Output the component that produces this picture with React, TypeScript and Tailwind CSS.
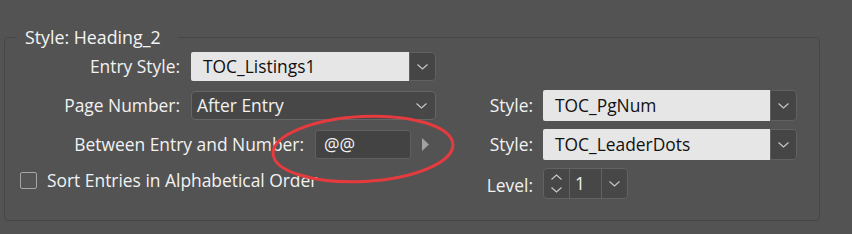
import React from "react";

const font = { fontFamily: '"Open Sans", "Noto Sans", sans-serif' };

function Chevron({ className = "" }: { className?: string }) {
  return (
    <svg width="11" height="6" viewBox="0 0 11 6" className={className}>
      <polyline points="0.5,0.5 5.5,5 10.5,0.5" fill="none" stroke="#c9c9c9" strokeWidth="1.1" />
    </svg>
  );
}

function LightSelect({ value, w, h }: { value: string; w: string; h: string }) {
  return (
    <div className={`flex ${w} ${h}`}>
      <div className="flex-1 bg-[#e6e6e6] flex items-center pl-[12px] text-[#111] rounded-l-[2px]">{value}</div>
      <div className="w-[27px] bg-[#454545] border border-[#616161] rounded-r-[4px] flex items-center justify-center">
        <Chevron />
      </div>
    </div>
  );
}

export default function App() {
  return (
    <div className="relative w-[852px] h-[234px] bg-[#535353] text-[#f2f2f2] text-[17.4px] overflow-hidden" style={font}>
      <fieldset className="ml-[4px] mt-[25px] w-[816px] border border-[#464646] rounded-[4px] pl-[15px] pt-[2px] pb-[21px]">
        <legend className="ml-[-3px] pl-[8px] pr-[17px] leading-[24px] text-[#f4f4f4] text-[17.8px]">Style: Heading_2</legend>
        <div className="flex flex-col gap-[8px]">
          {/* Row 1 */}
          <div className="flex items-center h-[31px]">
            <div className="w-[160px] text-right">Entry Style:</div>
            <div className="ml-[11px]">
              <LightSelect value="TOC_Listings1" w="w-[245px]" h="h-[29px]" />
            </div>
          </div>
          {/* Row 2 */}
          <div className="flex items-center h-[31px]">
            <div className="w-[416px] flex items-center">
              <div className="w-[160px] text-right">Page Number:</div>
              <div className="ml-[11px] w-[245px] h-[29px] bg-[#474747] border border-[#666] rounded-[4px] flex items-center pl-[5px] pr-[8px]">
                <span className="flex-1">After Entry</span>
                <Chevron />
              </div>
            </div>
            <div className="w-[97px] text-right">Style:</div>
            <div className="ml-[10px]">
              <LightSelect value="TOC_PgNum" w="w-[254px]" h="h-[31px]" />
            </div>
          </div>
          {/* Row 3 */}
          <div className="flex items-center h-[31px]">
            <div className="w-[416px] flex items-center">
              <div className="w-[284px] text-right">Between Entry and Number:</div>
              <div className="ml-[11px] w-[96px] h-[29px] bg-[#434343] border border-[#5f5f5f] rounded-[3px] flex items-center pl-[8px]">
                @@
              </div>
              <svg width="7" height="13" viewBox="0 0 7 13" className="ml-[11px]">
                <polygon points="0,0 7,6.5 0,13" fill="#a2a2a2" />
              </svg>
            </div>
            <div className="w-[97px] text-right">Style:</div>
            <div className="ml-[10px]">
              <LightSelect value="TOC_LeaderDots" w="w-[254px]" h="h-[31px]" />
            </div>
          </div>
          {/* Row 4 */}
          <div className="flex items-start h-[31px]">
            <div className="w-[416px] flex items-center mt-[4px]">
              <div className="w-[17px] h-[17px] border border-[#a6a6a6] rounded-[2px] bg-[#555]" />
              <span className="ml-[10px] leading-[17px]">Sort Entries in Alphabetical Order</span>
            </div>
            <div className="w-[97px] text-right h-[31px] flex items-center justify-end mt-[2px]">Level:</div>
            <div className="ml-[10px] flex h-[31px] w-[85px] border border-[#626262] rounded-[4px] bg-[#474747]">
              <div className="w-[26px] flex flex-col items-center justify-center gap-[7px] border-r border-[#626262]">
                <Chevron className="rotate-180" />
                <Chevron />
              </div>
              <div className="w-[32px] flex items-center pl-[5px] border-r border-[#626262]">1</div>
              <div className="flex-1 flex items-center justify-center">
                <Chevron />
              </div>
            </div>
          </div>
        </div>
      </fieldset>
      <svg className="absolute left-0 top-0 pointer-events-none" width="852" height="234">
        <ellipse cx="363" cy="149" rx="90" ry="32.5" fill="none" stroke="#e63b3e" strokeWidth="3" transform="rotate(-3 363 149)" />
      </svg>
    </div>
  );
}
